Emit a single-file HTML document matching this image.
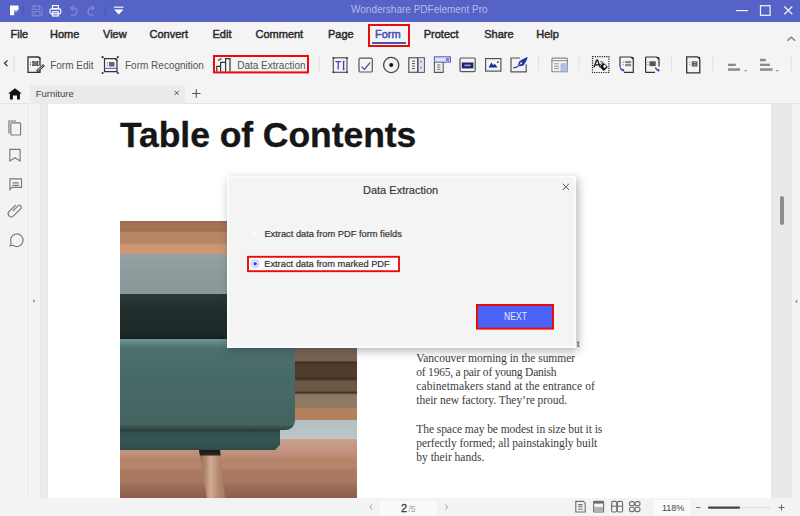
<!DOCTYPE html>
<html><head><meta charset="utf-8">
<style>
*{margin:0;padding:0;box-sizing:border-box}
html,body{width:800px;height:516px;overflow:hidden;background:#f3f3f3;font-family:"Liberation Sans",sans-serif;position:relative}
.a{position:absolute}
.t{position:absolute;white-space:nowrap;line-height:1}
#titlebar{left:0;top:0;width:800px;height:22px;background:#5562c6}
#menubar{left:0;top:22px;width:800px;height:24px;background:#f4f4f4}
#toolbar{left:0;top:46px;width:800px;height:34px;background:#f4f4f4}
#tabrow{left:0;top:80px;width:800px;height:24px;background:#f4f4f4;border-bottom:1px solid #e3e3e3}
.menu{font-weight:normal;font-size:11px;color:#2a2a2a;top:29.3px;-webkit-text-stroke:0.45px}
.tb{font-size:10px;color:#555;top:61px}
.sep{position:absolute;width:1px;background:#dedede}
</style></head>
<body>
<!-- title bar -->
<div id="titlebar" class="a"></div>
<div class="t" style="left:351px;top:5px;font-size:10px;color:#b4bbe6">Wondershare PDFelement Pro</div>

<div id="toolbar" class="a"></div>
<div id="tabrow" class="a"></div>
<!-- menu bar -->
<div id="menubar" class="a"></div>
<div class="t menu" style="left:10.5px">File</div>
<div class="t menu" style="left:50px">Home</div>
<div class="t menu" style="left:103px">View</div>
<div class="t menu" style="left:149.5px">Convert</div>
<div class="t menu" style="left:212.5px">Edit</div>
<div class="t menu" style="left:255.5px">Comment</div>
<div class="t menu" style="left:328px">Page</div>
<div class="t menu" style="left:375px;color:#3f4db5">Form</div>
<div class="t menu" style="left:423.75px">Protect</div>
<div class="t menu" style="left:484.25px">Share</div>
<div class="t menu" style="left:536.25px">Help</div>
<div class="a" style="left:368px;top:24px;width:42px;height:23px;border:2px solid #ec0b0b"></div>
<div class="a" style="left:371.5px;top:42px;width:34.5px;height:2px;background:#4655b4"></div>

<!-- toolbar -->


<!-- toolbar text -->
<div class="t tb" style="left:50.2px">Form Edit</div>
<div class="t tb" style="left:125px">Form Recognition</div>
<div class="t tb" style="left:237.2px">Data Extraction</div>
<!-- tab -->
<div class="a" style="left:30px;top:85px;width:155px;height:19px;background:#ebebeb"></div>
<div class="t" style="left:35.7px;top:88.6px;font-size:9.5px;color:#444">Furniture</div>

<!-- content -->
<div class="a" style="left:0;top:104px;width:28px;height:394px;background:#f3f3f3"></div>
<div class="a" style="left:28px;top:104px;width:1px;height:394px;background:#e6e6e6"></div>
<div class="a" style="left:29px;top:104px;width:1px;height:394px;background:#f9f9f9"></div>
<div class="a" style="left:30px;top:104px;width:10px;height:394px;background:#f3f3f3"></div>
<div class="a" style="left:40px;top:104px;width:8px;height:394px;background:#ececec;border-left:1px solid #e8e8e8;border-right:1px solid #e6e6e6"></div>
<div class="a" style="left:48px;top:104px;width:723px;height:394px;background:#ffffff"></div>
<div class="a" style="left:771px;top:104px;width:21px;height:394px;background:#e9e9e9"></div>
<div class="a" style="left:792px;top:104px;width:8px;height:394px;background:#f3f3f3"></div>
<div class="a" style="left:779.8px;top:196.2px;width:4.6px;height:29.2px;background:#8c8c8c;border-radius:2.3px"></div>


<!-- page content -->
<div class="t" style="left:120px;top:117.9px;font-size:35.5px;font-weight:bold;letter-spacing:-0.05px;color:#161616;-webkit-text-stroke:0.35px">Table of Contents</div>
<div class="a" id="photo" style="left:120px;top:221px;width:237px;height:277px;overflow:hidden;background:#b0785a">
 <div class="a" style="left:0;top:0;width:237px;height:33px;background:linear-gradient(#9a6a4e 0,#a97556 15%,#a06e52 30%,#b88867 36%,#b58666 66%,#cc9473 74%,#d09877 100%)"></div>
 <div class="a" style="left:0;top:33px;width:237px;height:40px;background:linear-gradient(#95a3a4,#8e9c9d 40%,#8a9899)"></div>
 <div class="a" style="left:0;top:73px;width:237px;height:45px;background:linear-gradient(#2a3a38,#222f2e 30%,#1c2827 90%,#121c1b)"></div>
 <div class="a" style="left:172px;top:118px;width:65px;height:81px;background:linear-gradient(#7d6654 0,#7a6352 27%,#3e2f25 28.5%,#4f3c2e 33%,#4f3c2e 47%,#3a2c22 49%,#6d5645 52%,#6d5645 64%,#3f3028 66%,#8e7a62 69%,#8e7a62 84%,#b4805c 86%,#b4805c 100%)"></div>
 <div class="a" style="left:150px;top:199px;width:87px;height:19px;background:linear-gradient(#b2bec2,#bdc8cb)"></div>
 <div class="a" style="left:0;top:218px;width:237px;height:59px;background:linear-gradient(#c9a08a 0,#c29480 20%,#b48268 38%,#b98870 46%,#ab785e 56%,#a87a64 70%,#9a6c56 82%,#8a5f4b 100%)"></div>
 <div class="a" style="left:0;top:208px;width:160px;height:21px;background:linear-gradient(#22302f 0,#34524f 18%,#365653 60%,#2f4a47 100%);clip-path:polygon(0 0,100% 0,100% 75%,97% 100%,0 100%)"></div>
 <div class="a" style="left:0;top:118px;width:175px;height:91px;background:linear-gradient(#6a9593 0,#5d8684 5%,#4c706d 10%,#476966 50%,#44635f 94%,#2c4240 100%);border-radius:0 9px 9px 0"></div>
 <div class="a" style="left:79px;top:229px;width:26px;height:48px;background:linear-gradient(#141817 0,#2a2622 10%,transparent 13%),linear-gradient(90deg,#8c6a56,#b89078 30%,#d0ac92 45%,#b48a6e 75%,#a07a62);clip-path:polygon(0 0,81% 0,100% 100%,30% 100%)"></div>
</div>
<div style="position:absolute;left:416.3px;top:352.2px;font-family:'Liberation Serif',serif;font-size:11.5px;color:#3c3c3c;line-height:13.9px">
 <div style="white-space:nowrap;letter-spacing:-0.03px">Vancouver morning in the summer</div>
 <div style="white-space:nowrap;letter-spacing:-0.21px">of 1965, a pair of young Danish</div>
 <div style="white-space:nowrap;letter-spacing:0.07px">cabinetmakers stand at the entrance of</div>
 <div style="white-space:nowrap;letter-spacing:-0.05px">their new factory. They’re proud.</div>
 <div style="height:15.2px"></div>
 <div style="white-space:nowrap;letter-spacing:-0.07px">The space may be modest in size but it is</div>
 <div style="white-space:nowrap;letter-spacing:-0.06px">perfectly formed; all painstakingly built</div>
 <div style="white-space:nowrap;letter-spacing:0px">by their hands.</div>
</div>
<div class="t" style="left:577px;top:338.5px;font-family:'Liberation Serif',serif;font-size:10px;color:#3a3a3a">t</div>

<!-- status bar -->
<div class="a" style="left:0;top:498px;width:800px;height:18px;background:#f3f3f3"></div>


<svg class="a" style="left:0;top:0" width="800" height="516" viewBox="0 0 800 516">
<!-- titlebar icons -->
<g fill="#fff">
 <rect x="10" y="5.5" width="8.5" height="4.5"/>
 <rect x="10" y="10" width="4.2" height="5.2"/>
 <rect x="14.5" y="10" width="3" height="2" fill="#aab1e6"/>
</g>
<rect x="22.3" y="6.5" width="1.4" height="9" fill="#4b57b9"/>
<g fill="none" stroke="#7d88d2" stroke-width="1.05">
 <path d="M32.2 6 H40.5 L42 7.5 V15.7 H32.2 Z"/>
 <rect x="34.5" y="6" width="5" height="3.5"/>
 <rect x="34" y="11.5" width="6" height="4.2"/>
</g>
<g fill="none" stroke="#fff" stroke-width="1.15">
 <rect x="52.5" y="5.6" width="5.8" height="3.2"/>
 <rect x="50" y="8.8" width="10.8" height="5" rx="1.5"/>
 <rect x="52.5" y="11.8" width="5.8" height="4.2"/>
</g>
<g fill="none" stroke="#8791d6" stroke-width="1.2">
 <path d="M72 8 H75 A4 4 0 0 1 75 15 H71"/>
 <path d="M73.5 5.8 L71 8 L73.5 10.2"/>
 <path d="M93 8 H90 A4 4 0 0 0 90 15 H94"/>
 <path d="M91.5 5.8 L94 8 L91.5 10.2"/>
</g>
<rect x="104.3" y="6.5" width="1.4" height="9" fill="#4b57b9"/>
<g fill="#fff">
 <rect x="114" y="6.5" width="9.5" height="1.5" fill="#d5d9f3"/>
 <path d="M114 9.5 H123.5 L118.75 14.6 Z"/>
</g>
<g stroke="#eef0fb" stroke-width="1.25" fill="none">
 <path d="M736 10.6 H748"/>
 <rect x="760.5" y="5.7" width="9.6" height="9.6"/>
 <path d="M784.3 6.5 L792.3 14.3 M792.3 6.5 L784.3 14.3"/>
</g>
<!-- collapse caret -->
<path d="M787.2 40.8 L791.2 37.2 L795.2 40.8" fill="none" stroke="#808080" stroke-width="1.4"/>
<!-- toolbar -->
<path d="M7.5 60.5 L4.5 63.2 L7.5 66" fill="none" stroke="#444" stroke-width="1.4"/>
<rect x="13.5" y="56" width="1" height="15.5" fill="#e0e0e0"/>
<!-- form edit -->
<g fill="none" stroke="#333" stroke-width="1.3">
 <path d="M40 66 V58.5 L38.5 57 H28 V72.3 H40 V70"/>
</g>
<path d="M38 57 L40.3 59.3 V57 Z" fill="#222"/>
<rect x="32.3" y="61.2" width="6" height="4.8" fill="#777"/>
<g fill="#333"><rect x="32.3" y="61.2" width="1.3" height="1.3"/><rect x="37" y="61.2" width="1.3" height="1.3"/><rect x="32.3" y="64.7" width="1.3" height="1.3"/><rect x="37" y="64.7" width="1.3" height="1.3"/><rect x="30" y="62" width="0.9" height="0.9"/><rect x="30" y="64.3" width="0.9" height="0.9"/></g>
<path d="M37 71.5 L44 65" stroke="#333" stroke-width="2.6" fill="none"/>
<path d="M37.6 70.9 L43.4 65.6" stroke="#ddd" stroke-width="0.9" fill="none"/>
<!-- form recognition -->
<g fill="none" stroke="#333" stroke-width="1.2">
 <path d="M104.5 58.6 H115 L117 60.6 V71.6 H104.5 Z"/>
</g>
<path d="M114.5 58.6 L117.2 61.3 V58.6 Z" fill="#222"/>
<g fill="#333"><circle cx="102.6" cy="57.2" r="1.1"/><circle cx="117.8" cy="57.2" r="1.1"/><circle cx="102.6" cy="73" r="1.1"/><circle cx="117.8" cy="73" r="1.1"/></g>
<rect x="109" y="62" width="5.5" height="4.5" fill="#666"/>
<g fill="#444"><rect x="107" y="62.5" width="0.9" height="0.9"/><rect x="107" y="64.8" width="0.9" height="0.9"/></g>
<rect x="104" y="67.8" width="14" height="1.1" fill="#5560d0"/>
<!-- data extraction -->
<rect x="214" y="56" width="94" height="16.4" fill="none" stroke="#ec0b0b" stroke-width="2"/>
<g fill="none" stroke="#333" stroke-width="1.2">
 <path d="M216.8 71.4 V66.3 H220.6 V71.4 M220.6 71.4 V62.3 H225.6 V71.4 M225.6 71.4 V58.6 H230 V71.4"/>
</g>
<path d="M218 60.5 L221.5 58.6" stroke="#333" stroke-width="1.1" fill="none"/>
<rect x="318.5" y="56" width="1" height="15.5" fill="#e0e0e0"/>
<!-- TI -->
<rect x="333.3" y="57.8" width="13.7" height="14.5" fill="none" stroke="#555" stroke-width="1.2"/>
<g fill="#333"><rect x="332.6" y="57.1" width="1.6" height="1.6"/><rect x="346.2" y="57.1" width="1.6" height="1.6"/><rect x="332.6" y="71.5" width="1.6" height="1.6"/><rect x="346.2" y="71.5" width="1.6" height="1.6"/></g>
<g stroke="#3a45b8" stroke-width="1.3" fill="none"><path d="M335.5 61.6 H341 M338.2 61.6 V69.5 M343.6 61 V69.7"/></g>
<g fill="#3a45b8"><path d="M342.3 62 L343.6 60.4 L344.9 62 Z"/><path d="M342.3 68.8 L343.6 70.4 L344.9 68.8 Z"/></g>
<!-- checkbox -->
<rect x="359" y="58.2" width="13.3" height="13.8" rx="1.3" fill="none" stroke="#555" stroke-width="1.2"/>
<path d="M361.6 66.6 L364.5 69.4 L370 62.6" fill="none" stroke="#3a45b8" stroke-width="1.3"/>
<!-- radio -->
<circle cx="391.2" cy="65" r="7.6" fill="none" stroke="#444" stroke-width="1.3"/>
<circle cx="391.2" cy="65" r="2" fill="#111"/>
<!-- listbox -->
<rect x="408.8" y="57.8" width="15.5" height="14.5" fill="none" stroke="#555" stroke-width="1.2"/>
<rect x="418.3" y="58.4" width="5.4" height="13.3" fill="#dfe2f5"/>
<rect x="417" y="57.8" width="1.6" height="14.5" fill="#555"/>
<g fill="#555"><rect x="412" y="60.6" width="3" height="1"/><rect x="412" y="63.1" width="3" height="1"/><rect x="412" y="65.6" width="3" height="1"/><rect x="412" y="68.1" width="3" height="1"/></g>
<g fill="#6a72c8"><circle cx="421" cy="61.6" r="0.9"/><circle cx="421" cy="67.6" r="0.9"/></g>
<!-- combo -->
<rect x="434.4" y="56.8" width="16" height="5.4" fill="#dfe2f5" stroke="#5a63c8" stroke-width="1.1"/>
<rect x="446" y="58" width="3" height="3" fill="#7a82d0"/>
<path d="M434.4 62.2 V72.4 H443.2 V62.2" fill="none" stroke="#555" stroke-width="1.1"/>
<g fill="#666"><rect x="437" y="64.5" width="3.5" height="0.9"/><rect x="437" y="66.7" width="3.5" height="0.9"/><rect x="437" y="68.9" width="3.5" height="0.9"/></g>
<!-- button -->
<rect x="460" y="58" width="15.2" height="13.6" rx="1.2" fill="none" stroke="#555" stroke-width="1.2"/>
<rect x="461.8" y="62.5" width="11.6" height="5.9" fill="#1d2369"/>
<rect x="464.3" y="64.6" width="6.5" height="1.6" fill="#9aa0d0"/>
<!-- image -->
<rect x="485.6" y="58.6" width="15.3" height="12.5" fill="none" stroke="#555" stroke-width="1.2"/>
<path d="M488.6 67.6 L491.4 62.6 L493.2 65.2 L494.8 63.8 L497.5 67.6 Z" fill="#1d2ba0"/>
<circle cx="497.9" cy="62.1" r="0.9" fill="#1d2ba0"/>
<!-- signature -->
<path d="M520 58 H511 V71.8 H526.2 V64.3" fill="none" stroke="#555" stroke-width="1.2"/>
<path d="M513.3 67.6 Q516 67.8 518 66.2" fill="none" stroke="#2633a8" stroke-width="1.1"/>
<path d="M517.2 66.8 L519.3 61.3 L524.4 58.2 L527.8 57 L526.6 60.4 L523.5 65.5 Z" fill="#2633a8"/>
<circle cx="521.2" cy="63.2" r="1" fill="#e8e8f0"/>
<path d="M517.2 66.8 L521.2 63.2" stroke="#e8e8f0" stroke-width="0.5"/>
<rect x="538" y="56" width="1" height="15" fill="#e0e0e0"/>
<!-- gray form -->
<rect x="551.9" y="58.1" width="15.5" height="13.7" rx="1" fill="none" stroke="#888" stroke-width="1.1"/>
<rect x="551.9" y="60.2" width="15.5" height="1" fill="#888"/>
<g fill="#888"><rect x="554" y="63.4" width="5" height="0.9"/><rect x="554" y="65.8" width="5" height="0.9"/><rect x="554" y="68.2" width="5" height="0.9"/></g>
<rect x="561" y="63.8" width="6.6" height="8" fill="#b9bde8" stroke="#8f95d8" stroke-width="0.6"/>
<rect x="578.5" y="56" width="1" height="15" fill="#e0e0e0"/>
<!-- AaB -->
<rect x="592.5" y="56.6" width="16.4" height="15.9" fill="none" stroke="#222" stroke-width="1.2" stroke-dasharray="1.2 1.1"/>
<path d="M594 67.2 L596.6 60.2 H597.6 L600.2 67.2 M595.2 64.8 H599" fill="none" stroke="#1a1a1a" stroke-width="1.3"/>
<path d="M600.3 61.8 Q602.6 60.8 602.8 63 V65.6 M602.8 63.8 Q600.3 63.6 600.5 65 Q600.9 66 602.8 65.2" fill="none" stroke="#333" stroke-width="0.9"/>
<path d="M603.8 63 L607.8 67 L603.8 71 L599.8 67 Z" fill="#111"/>
<path d="M604.6 64.6 L606.4 66.4 L604.6 68.2 L602.8 66.4 Z" fill="#f0f0f0"/>
<!-- doc arrow 1 -->
<path d="M620 67 V57 H631 L633.3 59.3 V72.4 H624" fill="none" stroke="#333" stroke-width="1.2"/>
<path d="M630.7 57 L633.5 59.8 V57 Z" fill="#222"/>
<rect x="625" y="61" width="6.2" height="2.3" rx="0.8" fill="#888"/><rect x="625" y="63.9" width="6.2" height="2.3" rx="0.8" fill="#888"/>
<g fill="#555"><rect x="622.8" y="61.8" width="0.9" height="0.9"/><rect x="622.8" y="64.3" width="0.9" height="0.9"/></g>
<path d="M620.2 67.3 Q620.8 70.2 623.5 70.2" fill="none" stroke="#2d3bb8" stroke-width="1.2"/>
<path d="M622.8 68.5 L624.6 70.2 L622.8 71.9 Z" fill="#2d3bb8"/>
<!-- doc arrow 2 -->
<path d="M645.6 57 H656.7 L659 59.3 V66.5 M655 72.4 H645.6 Z" fill="none" stroke="#333" stroke-width="1.2"/>
<path d="M645.6 57 V72.4" stroke="#333" stroke-width="1.2"/>
<path d="M656.4 57 L659.2 59.8 V57 Z" fill="#222"/>
<rect x="649.5" y="61.3" width="6.2" height="4.8" fill="#555"/>
<g fill="#555"><rect x="647.5" y="61.8" width="0.9" height="0.9"/><rect x="647.5" y="64.3" width="0.9" height="0.9"/></g>
<path d="M655.5 67.3 Q656.1 70.2 658.8 70.2" fill="none" stroke="#2d3bb8" stroke-width="1.2"/>
<path d="M658.1 68.5 L659.9 70.2 L658.1 71.9 Z" fill="#2d3bb8"/>
<rect x="671" y="56" width="1" height="15" fill="#e0e0e0"/>
<!-- doc -->
<path d="M686.7 56.9 H697.7 L699.8 59 V72.8 H686.7 Z" fill="none" stroke="#333" stroke-width="1.3"/>
<path d="M697.4 56.9 L700 59.5 V56.9 Z" fill="#222"/>
<rect x="691.8" y="61.3" width="5.6" height="5.2" fill="#555"/>
<rect x="692.9" y="62.3" width="3.4" height="0.8" fill="#bbb"/><rect x="692.9" y="64.6" width="3.4" height="0.8" fill="#bbb"/>
<g fill="#666"><rect x="689.2" y="61.8" width="0.9" height="0.9"/><rect x="689.2" y="64.3" width="0.9" height="0.9"/></g>
<rect x="712.2" y="56" width="1" height="15" fill="#e0e0e0"/>
<!-- align -->
<g fill="#8a8a8a">
 <rect x="728" y="63.7" width="7.8" height="2.3"/><rect x="728" y="68.3" width="12" height="2.5"/><rect x="744.6" y="70" width="2" height="1.3"/>
 <rect x="760" y="58.8" width="5.8" height="2.5"/><rect x="760" y="63.7" width="10" height="2.3"/><rect x="760" y="68.3" width="12.5" height="2.5"/><rect x="776.2" y="70" width="2" height="1.3"/>
</g>
<rect x="790.7" y="56" width="1" height="15" fill="#e0e0e0"/>
<!-- tab row -->
<path d="M15 88.3 L21.8 93.6 H19.9 V99.5 H17 V95.6 H12.9 V99.5 H9.9 V93.6 H8.1 Z" fill="#111"/>
<path d="M174.6 90.8 L178.8 95 M178.8 90.8 L174.6 95" stroke="#555" stroke-width="1"/>
<path d="M192 93.5 H200.5 M196.25 89.2 V97.8" stroke="#555" stroke-width="1.1"/>
<!-- sidebar -->
<g fill="none" stroke="#7a7a7a" stroke-width="1.15">
 <path d="M8.9 133.5 V121 H16"/>
 <rect x="10.8" y="122.8" width="9.8" height="12.2" rx="1"/>
 <path d="M9.8 149.4 H20.1 V161 L15 157.8 L9.8 161 Z"/>
 <path d="M9.9 189.5 V178.9 H21.5 V187.4 H12 Z"/>
 <path d="M12.5 182.8 H18.8 M12.5 185.3 H18.8"/>
 <path d="M12.8 211 L18.2 205.6 A2 2 0 0 1 21 208.4 L13.5 215.9 A3.1 3.1 0 0 1 9.1 211.5 L15.8 204.8"/>
 <path d="M10.2 245.8 L11.2 243.2 A6.3 6.3 0 1 1 13 245.3 Z"/>
</g>
<path d="M33.2 299.3 L35.6 301 L33.2 302.7 Z" fill="#999"/>
<path d="M797.4 299.6 L794.8 301.5 L797.4 303.4 Z" fill="#999"/>
</svg>


<!-- status bar items -->
<div class="a" style="left:380px;top:501px;width:57px;height:15px;background:#fafafa"></div>
<div class="t" style="left:401px;top:503px;font-size:11px;color:#3a3a3a;-webkit-text-stroke:0.3px">2</div>
<div class="t" style="left:408.5px;top:504.8px;font-size:8.5px;color:#9a9a9a">/5</div>
<div class="a" style="left:654px;top:500px;width:36px;height:16px;background:#fafafa"></div>
<div class="t" style="left:662px;top:503.5px;font-size:9px;color:#444">118%</div>
<svg class="a" style="left:0;top:0" width="800" height="516" viewBox="0 0 800 516">
 <path d="M372 504.5 L370 507 L372 509.5" fill="none" stroke="#999" stroke-width="1"/>
 <path d="M445.5 504.5 L447.5 507 L445.5 509.5" fill="none" stroke="#999" stroke-width="1"/>
 <g fill="none" stroke="#6e6e6e" stroke-width="1.1">
  <path d="M575.8 501.4 H583.4 L585.2 503.2 V512 H575.8 Z"/>
  <path d="M578.2 504.6 H582.6 M578.2 506.8 H582.6 M578.2 509.2 H582.6"/>
  <rect x="593.6" y="501.4" width="10" height="10.6" rx="0.8"/>
  <rect x="611.6" y="501.4" width="5.2" height="10.6" rx="1.6"/><rect x="617.4" y="501.4" width="5.2" height="10.6" rx="1.6"/>
  <path d="M611.6 506.2 H622.6"/>
  <rect x="629.4" y="501.6" width="5" height="4.2" rx="2"/><rect x="635" y="501.6" width="5" height="4.2" rx="2"/>
  <rect x="629.4" y="507.2" width="5" height="4.4" rx="2"/><rect x="635" y="507.2" width="5" height="4.4" rx="2"/>
 </g>
 <rect x="593.6" y="501" width="10" height="2.6" fill="#6e6e6e"/>
 <rect x="594.2" y="507" width="8.8" height="4.6" fill="#b0b0b0"/>
 <path d="M696 507.5 H700.5" stroke="#777" stroke-width="1"/>
 <rect x="708" y="506.5" width="32" height="2.2" rx="1" fill="#444"/>
 <rect x="740" y="507" width="30" height="1.2" fill="#ddd"/>
 <path d="M778.5 507.5 H784.5 M781.5 504.5 V510.5" stroke="#666" stroke-width="1"/>
</svg>

<!-- dialog -->
<div class="a" style="left:227px;top:176px;width:349px;height:172px;background:#f4f4f4;border:2.5px solid #fbfbfb;box-shadow:2px 3px 9px rgba(40,40,60,0.35)"></div>
<div class="t" style="left:363px;top:184.7px;font-size:11px;color:#333;-webkit-text-stroke:0.15px">Data Extraction</div>
<svg class="a" style="left:0;top:0" width="800" height="516" viewBox="0 0 800 516">
 <path d="M562.7 183.7 L569 190 M569 183.7 L562.7 190" stroke="#555" stroke-width="1"/>
 <circle cx="254.8" cy="233.6" r="3.5" fill="#fbfbfb" stroke="#e6e6e6" stroke-width="0.6"/>
 <rect x="248" y="256.8" width="151" height="14.4" fill="#fafafa" stroke="#ec0b0b" stroke-width="1.9"/>
 <circle cx="255.2" cy="263.8" r="3.6" fill="#fff" stroke="#a9b3ec" stroke-width="1"/>
 <circle cx="255.2" cy="263.8" r="1.8" fill="#2a45e8"/>
 <rect x="477" y="305" width="76" height="23.6" fill="#4c63f8" stroke="#ec0b0b" stroke-width="2"/>
</svg>
<div class="t" style="left:264.4px;top:229.5px;font-size:9.3px;color:#333;-webkit-text-stroke:0.2px">Extract data from PDF form fields</div>
<div class="t" style="left:264.2px;top:259.9px;font-size:9.3px;color:#333;-webkit-text-stroke:0.2px">Extract data from marked PDF</div>
<div class="t" style="left:504.3px;top:312px;font-size:10.4px;transform:scaleX(0.83);transform-origin:0 0;color:#e6eaff">NEXT</div>

</body></html>
